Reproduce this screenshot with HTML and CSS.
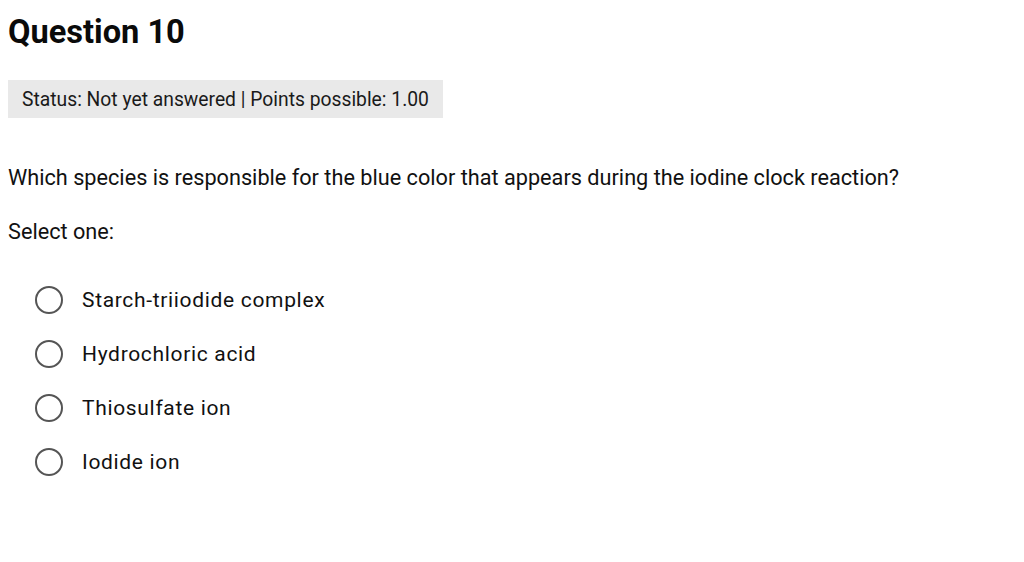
FILE: index.html
```html
<!DOCTYPE html>
<html>
<head>
<meta charset="utf-8">
<link rel="stylesheet" href="styles.css">
</head>
<body>
<main class="question">
  <h1 class="title">Question 10</h1>
  <div class="status">Status: Not yet answered | Points possible: 1.00</div>
  <p class="prompt">Which species is responsible for the blue color that appears during the iodine clock reaction?</p>
  <p class="select">Select one:</p>
  <ul class="options">
    <li class="option"><span class="radio"></span><span class="label">Starch-triiodide complex</span></li>
    <li class="option"><span class="radio"></span><span class="label">Hydrochloric acid</span></li>
    <li class="option"><span class="radio"></span><span class="label">Thiosulfate ion</span></li>
    <li class="option"><span class="radio"></span><span class="label">Iodide ion</span></li>
  </ul>
</main>
</body>
</html>
```
FILE: styles.css
```css
html, body {
  margin: 0;
  padding: 0;
  background: #fff;
}
body {
  font-family: Roboto, "Liberation Sans", sans-serif;
  color: #111;
}
.question {
  padding: 8px 8px 0 8px;
  display: flex;
  flex-direction: column;
  align-items: flex-start;
}
.title {
  margin: 5px 0 0 0;
  font-size: 32.6px;
  line-height: 38px;
  font-weight: 700;
  color: #0a0a0a;
}
.status {
  margin-top: 29px;
  background: #e9e9e9;
  padding: 1px 14px 0 14px;
  height: 38px;
  box-sizing: border-box;
  line-height: 37px;
  font-size: 19.3px;
  color: #1a1a1a;
}
.prompt {
  margin: 46px 0 0 0;
  font-size: 21.7px;
  line-height: 28px;
}
.select {
  margin: 26px 0 0 0;
  font-size: 21.7px;
  line-height: 28px;
}
.options {
  list-style: none;
  margin: 40px 0 0 0;
  padding: 0 0 0 27px;
  display: flex;
  flex-direction: column;
  gap: 26px;
}
.option {
  display: flex;
  align-items: center;
  gap: 19px;
  height: 28px;
}
.radio {
  flex: none;
  width: 28px;
  height: 28px;
  border: 2.5px solid #555;
  border-radius: 50%;
  box-sizing: border-box;
}
.label {
  font-size: 21px;
  letter-spacing: 0.67px;
  color: #111;
}
```
